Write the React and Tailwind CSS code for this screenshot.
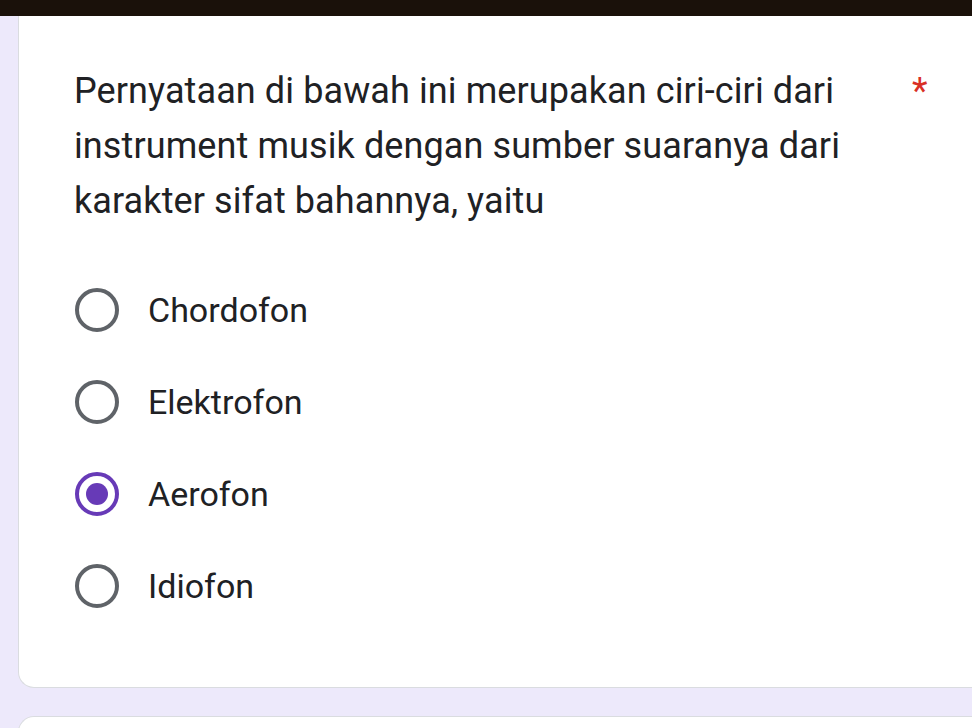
export default function App() {
  const options = ["Chordofon", "Elektrofon", "Aerofon", "Idiofon"];
  const selected = "Aerofon";
  return (
    <div className="w-[972px] h-[728px] overflow-hidden bg-[#ede9fb] flex flex-col" style={{ fontFamily: "Roboto, 'Noto Sans', sans-serif" }}>
      <div className="h-[16px] bg-[#1a110a] shrink-0" />
      <div className="ml-[18px] bg-white rounded-bl-[16px] border-l border-b border-[#dadce0] h-[672px] shrink-0 flex flex-col">
        <div className="flex items-start pl-[55px] pt-[48px]">
          <div className="text-[36px] leading-[55px] text-[#202124] w-[838px] tracking-[0.1px]">
            Pernyataan di bawah ini merupakan ciri-ciri dari instrument musik dengan sumber suaranya dari karakter sifat bahannya, yaitu
          </div>
          <div className="text-[36px] leading-[55px] text-[#d93025]">*</div>
        </div>
        <div className="flex flex-col pl-[56px] mt-[59px] gap-[48px]">
          {options.map((o) => (
            <div key={o} className="flex items-center h-[44px]">
              {o === selected ? (
                <div className="w-[44px] h-[44px] rounded-full border-[4px] border-[#673ab7] flex items-center justify-center">
                  <div className="w-[22px] h-[22px] rounded-full bg-[#673ab7]" />
                </div>
              ) : (
                <div className="w-[44px] h-[44px] rounded-full border-[4px] border-[#5f6368]" />
              )}
              <span className="ml-[29px] text-[34px] text-[#202124]">{o}</span>
            </div>
          ))}
        </div>
      </div>
      <div className="ml-[18px] mt-[28px] bg-white rounded-tl-[16px] border-l border-t border-[#dadce0] h-[40px] shrink-0" />
    </div>
  );
}
